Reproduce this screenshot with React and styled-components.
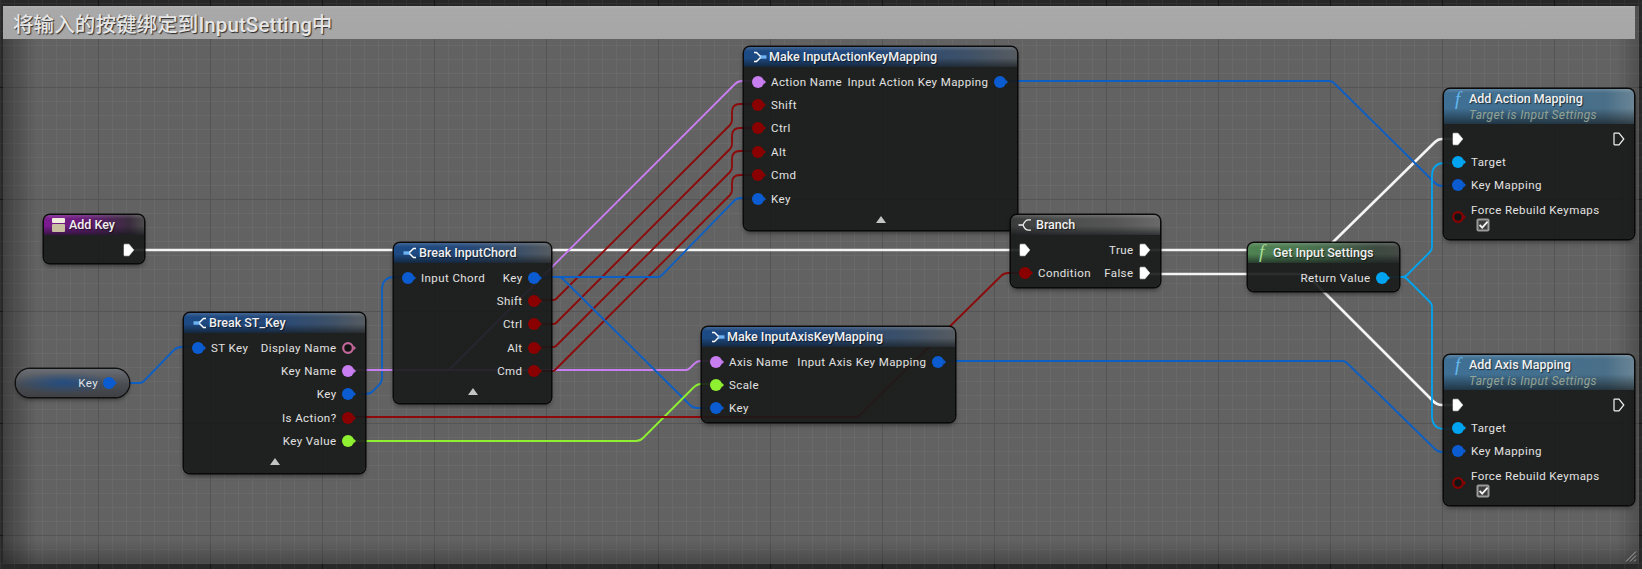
import React from "react";
import styled, { createGlobalStyle } from "styled-components";

const Global = createGlobalStyle`
  html, body { margin: 0; padding: 0; background: #242424; }
  #root { width: 1642px; height: 569px; overflow: hidden; }
`;

const C = {
  blue: "#0a5cd0",
  wireBlue: "#0d5fc4",
  purple: "#c87df0",
  red: "#8a0000",
  wireRed: "#8c0a0a",
  green: "#8ff032",
  sky: "#00a4f0",
  pink: "#c4689a",
};

const Canvas = styled.div`
  position: relative;
  width: 1642px;
  height: 569px;
  overflow: hidden;
  font-family: Roboto, "Liberation Sans", sans-serif;
  background-color: #282828;
  background-image:
    linear-gradient(to right, #161616 1px, transparent 1px),
    linear-gradient(to bottom, #161616 1px, transparent 1px),
    linear-gradient(to right, #323232 1px, transparent 1px),
    linear-gradient(to bottom, #323232 1px, transparent 1px);
  background-size: 112px 112px, 112px 112px, 14px 14px, 14px 14px;
  background-position: 98px 0, 0 87px, 0 0, 0 3px;
`;

const CommentBox = styled.div`
  position: absolute;
  left: 3px;
  top: 6px;
  width: 1636px;
  height: 558px;
  background:
    linear-gradient(to right, rgba(0, 0, 0, 0.34), rgba(0, 0, 0, 0) 34px),
    linear-gradient(to top, rgba(0, 0, 0, 0.26), rgba(0, 0, 0, 0) 24px),
    linear-gradient(to left, rgba(0, 0, 0, 0.2), rgba(0, 0, 0, 0) 22px),
    rgba(255, 255, 255, 0.27);
`;

const CommentBar = styled.div`
  height: 33px;
  width: 1632px;
  display: flex;
  align-items: center;
  box-sizing: border-box;
  padding-left: 10px;
  background: linear-gradient(to bottom, #b2b2b2, #a9a9a9 3px, #a6a6a6);
  color: #e6e6e6;
  font-family: Roboto, "Noto Sans CJK SC", sans-serif;
  font-size: 20.5px;
  font-weight: 500;
  letter-spacing: 0.1px;
  text-shadow: 1px 1px 1px rgba(0, 0, 0, 0.75);
`;

const Grip = styled.svg`
  position: absolute;
  left: 1625px;
  top: 551px;
`;

const WireLayer = styled.svg`
  position: absolute;
  left: 0;
  top: 0;
`;

const Node = styled.div`
  position: absolute;
  left: ${(p) => p.$x}px;
  top: ${(p) => p.$y}px;
  width: ${(p) => p.$w}px;
  box-sizing: border-box;
  padding-bottom: 2px;
  border-radius: 6px;
  background: rgba(24, 26, 25, 0.91);
  box-shadow: 0 0 0 1.5px rgba(6, 6, 6, 0.95), 0 3px 5px rgba(0, 0, 0, 0.45);
`;

const headers = {
  blue: "linear-gradient(to right, #1c4a84, #24487a 45%, #3c5068 80%, #565b61)",
  func: "linear-gradient(to right, #3e6f94, #44708f 50%, #4a6f88 85%, #6a8596)",
  green: "linear-gradient(to right, #4f8352, #4a7550 40%, #3c4a40 85%, #454a46)",
  purple: "linear-gradient(to right, #7c1a90, #641c74 45%, #3a2c3e 85%, #4c4a4c)",
  gray: "linear-gradient(to right, #3a3b3b, #4a4b4b 30%, #565656 70%, #6a6a6a)",
};

const Header = styled.div`
  position: relative;
  box-sizing: border-box;
  height: ${(p) => (p.$sub ? 35 : 20)}px;
  border-radius: 6px 6px 0 0;
  padding: ${(p) => (p.$sub ? "1px" : "0")} 6px 0 25px;
  display: flex;
  flex-direction: column;
  justify-content: ${(p) => (p.$sub ? "flex-start" : "center")};
  background:
    linear-gradient(to bottom, rgba(255, 255, 255, 0.16), rgba(255, 255, 255, 0) 4px),
    linear-gradient(to bottom, rgba(0, 0, 0, 0) 55%, rgba(14, 18, 20, 0.62) 100%),
    ${(p) => headers[p.$tone]};
`;

const Title = styled.div`
  color: #f0f0f0;
  font-size: 12.5px;
  font-weight: 500;
  line-height: 18px;
  white-space: nowrap;
  text-shadow: 1px 1px 1px rgba(0, 0, 0, 0.6);
`;

const Subtitle = styled.div`
  color: #93a394;
  font-size: 12px;
  font-style: italic;
  line-height: 14px;
  letter-spacing: 0.35px;
  white-space: nowrap;
`;

const HeadIcon = styled.svg`
  position: absolute;
  left: ${(p) => p.$l ?? 9}px;
  top: ${(p) => p.$t ?? 3}px;
`;

const FuncGlyph = styled.span`
  position: absolute;
  left: 11px;
  top: ${(p) => p.$t}px;
  color: ${(p) => p.$c};
  font-family: "Liberation Serif", serif;
  font-style: italic;
  font-weight: 400;
  font-size: 19px;
  line-height: 20px;
`;

const Body = styled.div`
  padding-top: 3px;
`;

const Row = styled.div`
  height: ${(p) => (p.$tall ? 40 : 23.4)}px;
  display: flex;
  align-items: center;
  justify-content: space-between;
  padding: 0 9.5px 0 8px;
`;

const Side = styled.div`
  display: flex;
  align-items: center;
  gap: 5px;
`;

const Label = styled.span`
  color: #e2e2e2;
  font-size: 11.5px;
  letter-spacing: 0.42px;
  white-space: nowrap;
`;

const PinShape = styled.svg`
  flex: none;
  display: block;
`;

const ExecShape = styled.svg`
  flex: none;
  display: block;
`;

const Footer = styled.div`
  height: 18px;
  display: flex;
  align-items: center;
  justify-content: center;
`;

const Collapse = styled.div`
  width: 0;
  height: 0;
  border-left: 5px solid transparent;
  border-right: 5px solid transparent;
  border-bottom: 7px solid #c4c4c4;
`;

const Stack = styled.div`
  display: flex;
  flex-direction: column;
  gap: 1px;
`;

const Check = styled.svg`
  display: block;
  margin-left: 5px;
`;

const VarPill = styled.div`
  position: absolute;
  left: 16px;
  top: 369px;
  width: 113px;
  height: 28px;
  box-sizing: border-box;
  padding-right: 12px;
  border-radius: 14px;
  display: flex;
  align-items: center;
  justify-content: flex-end;
  gap: 5px;
  background:
    radial-gradient(ellipse 50px 11px at 48px 14px, rgba(24, 76, 140, 0.78), rgba(24, 76, 140, 0) 100%),
    linear-gradient(to bottom, #6b6f75, #4a4d52 55%, #3e4044);
  box-shadow: 0 0 0 1.5px #111, 0 3px 4px rgba(0, 0, 0, 0.4);
`;

const Pin = ({ c, hollow }) => (
  <PinShape width="14" height="12" viewBox="0 0 14 12">
    <path d="M11.5 3.6 L14 6 L11.5 8.4 Z" fill={c} />
    {hollow ? (
      <circle cx="6" cy="6" r="4.8" fill="#141414" stroke={c} strokeWidth="2.2" />
    ) : (
      <circle cx="6" cy="6" r="6" fill={c} />
    )}
  </PinShape>
);

const Exec = ({ hollow }) => (
  <ExecShape width="12" height="14" viewBox="0 0 12 14">
    <path
      d="M1.5 1.2 H6 L10.8 7 L6 12.8 H1.5 Q1 12.8 1 12 V2 Q1 1.2 1.5 1.2 Z"
      fill={hollow ? "none" : "#fff"}
      stroke="#f2f2f2"
      strokeWidth={hollow ? 1.2 : 0.6}
    />
  </ExecShape>
);

const Glyph = ({ kind }) => {
  if (kind === "break")
    return (
      <HeadIcon width="14" height="14" viewBox="0 0 14 14" $l={9} $t={3}>
        <path d="M0.5 7 H7" stroke="#6db2f2" strokeWidth="3.4" />
        <path d="M6.5 6.5 L10.5 2.5 H13 M6.5 7.5 L10.5 11.5 H13" stroke="#fff" strokeWidth="1.4" fill="none" />
      </HeadIcon>
    );
  if (kind === "make")
    return (
      <HeadIcon width="14" height="14" viewBox="0 0 14 14" $l={9} $t={3}>
        <path d="M7 7 H13.5" stroke="#6db2f2" strokeWidth="3.4" />
        <path d="M1 2.5 H3.5 L7.5 6.5 M1 11.5 H3.5 L7.5 7.5" stroke="#fff" strokeWidth="1.4" fill="none" />
      </HeadIcon>
    );
  if (kind === "branch")
    return (
      <HeadIcon width="14" height="14" viewBox="0 0 14 14" $l={7} $t={3}>
        <path d="M13 1.8 H10.5 Q7 1.8 5 7 Q7 12.2 10.5 12.2 H13 M0.5 7 H5" stroke="#eee" strokeWidth="1.3" fill="none" />
      </HeadIcon>
    );
  return (
    <HeadIcon width="13" height="14" viewBox="0 0 13 14" $l={8} $t={3}>
      <rect x="0" y="0" width="13" height="5" rx="1" fill="#f1eee0" />
      <rect x="0" y="6" width="13" height="8" rx="1" fill="#c8bea0" />
    </HeadIcon>
  );
};

const Tick = () => (
  <Check width="14" height="14" viewBox="0 0 14 14">
    <rect x="0.5" y="0.5" width="13" height="13" rx="2" fill="#9a9a9a" />
    <rect x="2.5" y="2.5" width="9" height="9" fill="#3c3c3c" />
    <path d="M3.6 6.8 L6.2 9.6 L11.6 3.6" stroke="#f2f2f2" strokeWidth="1.9" fill="none" />
  </Check>
);

const R = ({ inC, inL, outC, outL, inHollow, outHollow, execIn, execOut, execOutHollow, tick }) => (
  <Row $tall={tick}>
    <Side>
      {execIn && <Exec />}
      {inC && <Pin c={inC} hollow={inHollow} />}
      {tick ? (
        <Stack>
          <Label>{inL}</Label>
          <Tick />
        </Stack>
      ) : (
        inL && <Label>{inL}</Label>
      )}
    </Side>
    <Side>
      {outL && <Label>{outL}</Label>}
      {outC && <Pin c={outC} hollow={outHollow} />}
      {execOut && <Exec hollow={execOutHollow} />}
    </Side>
  </Row>
);

const wires = [
  { c: "#f4f4f4", w: 2.6, d: "M128 250 H1024" },
  { c: "#f4f4f4", w: 2.6, d: "M1145 250 H1322 Q1325 250 1327 248 L1435 142 Q1438 139 1442 139 H1458" },
  { c: "#f4f4f4", w: 2.6, d: "M1145 274 H1303 Q1306 274 1308 276 L1433 401 Q1437 405 1442 405 H1458" },
  { c: C.wireBlue, w: 1.8, d: "M110 383 H139 Q142 383 144 381 L174 350 Q177 347 181 347 H198" },
  { c: C.wireBlue, w: 1.8, d: "M347 394 H366 Q370 394 373 391 L379 385 Q382 382 382 378 V290 Q382 277 395 277 H408" },
  { c: C.purple, w: 1.8, d: "M347 370 H449 L735 84 Q738 81 742 81 H758" },
  { c: C.purple, w: 1.8, d: "M347 370 H686 Q688 370 690 368 L694 364 Q697 361 700 361 H717" },
  { c: C.wireRed, w: 1.8, d: "M533 300 H553 Q555 300 556 299 L730 125 Q732 123 732 120 V112 Q732 104 740 104 H758" },
  { c: C.wireRed, w: 1.8, d: "M533 324 H553 Q555 324 556 323 L730 149 Q732 147 732 144 V136 Q732 128 740 128 H758" },
  { c: C.wireRed, w: 1.8, d: "M533 347 H553 Q555 347 556 346 L730 172 Q732 170 732 167 V159 Q732 151 740 151 H758" },
  { c: C.wireRed, w: 1.8, d: "M533 371 H552 Q554 371 555 370 L730 195 Q732 193 732 190 V183 Q732 175 740 175 H758" },
  { c: C.wireBlue, w: 1.8, d: "M533 277 H658 Q660 277 662 275 L734 201 Q737 198 741 198 H758" },
  { c: C.wireBlue, w: 1.8, d: "M533 277 H559 Q561 277 563 279 L690 405 Q693 408 697 408 H717" },
  { c: C.green, w: 1.8, d: "M347 441 H636 Q640 441 643 438 L693 388 Q697 384 701 384 H717" },
  { c: C.wireRed, w: 1.8, d: "M347 417 H855 Q858 417 860 415 L1001 276 Q1004 273 1008 273 H1024" },
  { c: C.wireBlue, w: 1.8, d: "M999 81 H1329 Q1332 81 1334 83 L1435 183 Q1438 186 1442 186 H1458" },
  { c: C.wireBlue, w: 1.8, d: "M936 361 H1342 Q1345 361 1347 363 L1435 449 Q1438 452 1442 452 H1458" },
  { c: C.sky, w: 1.8, d: "M1382 277 H1403 Q1405 277 1407 275 L1430 252 Q1432 250 1432 247 V176 Q1432 163 1445 163 H1458" },
  { c: C.sky, w: 1.8, d: "M1382 277 H1403 Q1405 277 1407 279 L1430 302 Q1432 304 1432 307 V416 Q1432 429 1445 429 H1458" },
];

export default function App() {
  return (
    <Canvas>
      <Global />
      <CommentBox>
        <CommentBar>将输入的按键绑定到InputSetting中</CommentBar>
      </CommentBox>
      <Grip width="12" height="11" viewBox="0 0 12 11">
        <path d="M1 10.5 L11 0.5 M5 10.5 L11 4.5 M9 10.5 L11 8.5" stroke="#a8a8a8" strokeWidth="1" />
      </Grip>

      <WireLayer width="1642" height="569" viewBox="0 0 1642 569">
        {wires.map((w, i) => (
          <path key={i} d={w.d} fill="none" stroke={w.c} strokeWidth={w.w} strokeLinejoin="round" />
        ))}
      </WireLayer>

      <Node $x={44} $y={215} $w={100}>
        <Header $tone="purple">
          <Glyph kind="event" />
          <Title>Add Key</Title>
        </Header>
        <Body>
          <R execOut />
        </Body>
      </Node>

      <VarPill>
        <Label>Key</Label>
        <Pin c={C.blue} />
      </VarPill>

      <Node $x={184} $y={313} $w={181}>
        <Header $tone="blue">
          <Glyph kind="break" />
          <Title>Break ST_Key</Title>
        </Header>
        <Body>
          <R inC={C.blue} inL="ST Key" outL="Display Name" outC={C.pink} outHollow />
          <R outL="Key Name" outC={C.purple} />
          <R outL="Key" outC={C.blue} />
          <R outL="Is Action?" outC={C.red} />
          <R outL="Key Value" outC={C.green} />
        </Body>
        <Footer>
          <Collapse />
        </Footer>
      </Node>

      <Node $x={394} $y={243} $w={157}>
        <Header $tone="blue">
          <Glyph kind="break" />
          <Title>Break InputChord</Title>
        </Header>
        <Body>
          <R inC={C.blue} inL="Input Chord" outL="Key" outC={C.blue} />
          <R outL="Shift" outC={C.red} />
          <R outL="Ctrl" outC={C.red} />
          <R outL="Alt" outC={C.red} />
          <R outL="Cmd" outC={C.red} />
        </Body>
        <Footer>
          <Collapse />
        </Footer>
      </Node>

      <Node $x={744} $y={47} $w={273}>
        <Header $tone="blue">
          <Glyph kind="make" />
          <Title>Make InputActionKeyMapping</Title>
        </Header>
        <Body>
          <R inC={C.purple} inL="Action Name" outL="Input Action Key Mapping" outC={C.blue} />
          <R inC={C.red} inL="Shift" />
          <R inC={C.red} inL="Ctrl" />
          <R inC={C.red} inL="Alt" />
          <R inC={C.red} inL="Cmd" />
          <R inC={C.blue} inL="Key" />
        </Body>
        <Footer>
          <Collapse />
        </Footer>
      </Node>

      <Node $x={702} $y={327} $w={253}>
        <Header $tone="blue">
          <Glyph kind="make" />
          <Title>Make InputAxisKeyMapping</Title>
        </Header>
        <Body>
          <R inC={C.purple} inL="Axis Name" outL="Input Axis Key Mapping" outC={C.blue} />
          <R inC={C.green} inL="Scale" />
          <R inC={C.blue} inL="Key" />
        </Body>
      </Node>

      <Node $x={1011} $y={215} $w={149}>
        <Header $tone="gray">
          <Glyph kind="branch" />
          <Title>Branch</Title>
        </Header>
        <Body>
          <R execIn outL="True" execOut />
          <R inC={C.red} inL="Condition" outL="False" execOut />
        </Body>
      </Node>

      <Node $x={1248} $y={243} $w={151}>
        <Header $tone="green">
          <FuncGlyph $t={-1} $c="#a6dc96">f</FuncGlyph>
          <Title>Get Input Settings</Title>
        </Header>
        <Body>
          <R outL="Return Value" outC={C.sky} />
        </Body>
      </Node>

      <Node $x={1444} $y={89} $w={190}>
        <Header $tone="func" $sub>
          <FuncGlyph $t={0} $c="#63b8f0">f</FuncGlyph>
          <Title>Add Action Mapping</Title>
          <Subtitle>Target is Input Settings</Subtitle>
        </Header>
        <Body>
          <R execIn execOut execOutHollow />
          <R inC={C.sky} inL="Target" />
          <R inC={C.blue} inL="Key Mapping" />
          <R inC={C.red} inHollow inL="Force Rebuild Keymaps" tick />
        </Body>
      </Node>

      <Node $x={1444} $y={355} $w={190}>
        <Header $tone="func" $sub>
          <FuncGlyph $t={0} $c="#63b8f0">f</FuncGlyph>
          <Title>Add Axis Mapping</Title>
          <Subtitle>Target is Input Settings</Subtitle>
        </Header>
        <Body>
          <R execIn execOut execOutHollow />
          <R inC={C.sky} inL="Target" />
          <R inC={C.blue} inL="Key Mapping" />
          <R inC={C.red} inHollow inL="Force Rebuild Keymaps" tick />
        </Body>
      </Node>
    </Canvas>
  );
}
